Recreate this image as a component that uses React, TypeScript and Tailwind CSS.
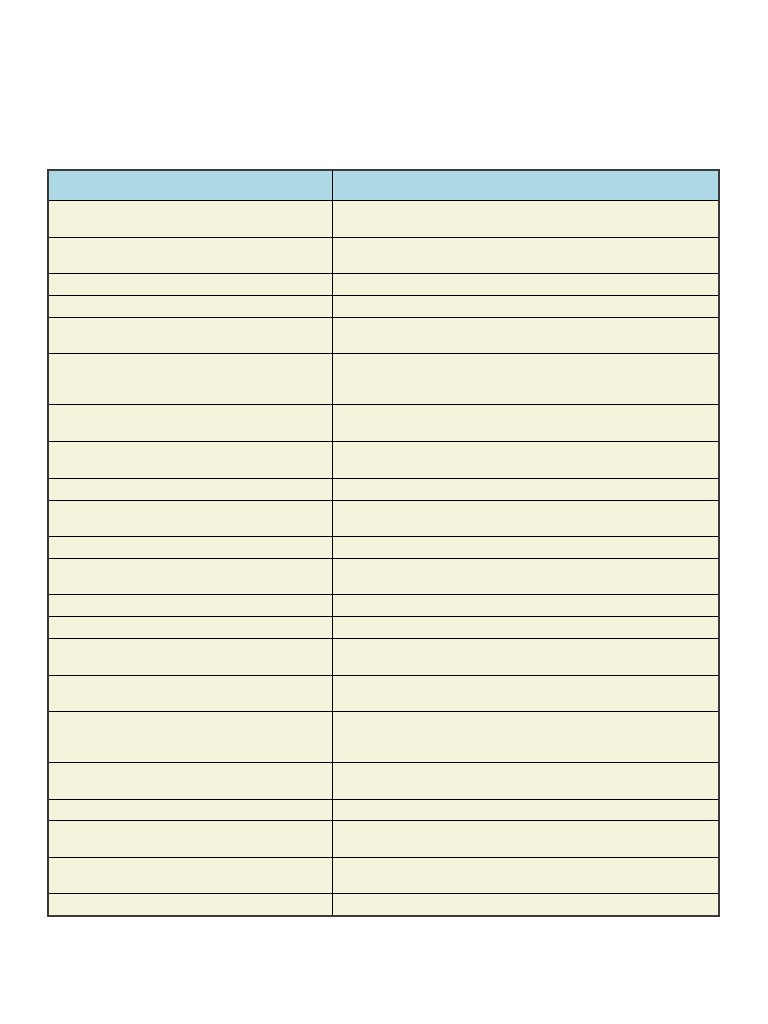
export default function App() {
    // row heights measured off the sheet, border included
    const rowHeights = [37, 36, 22, 22, 36, 51, 37, 37, 22, 36, 22, 36, 22, 22, 37, 36, 51, 37, 21, 37, 36, 22];

    return (
        <div className="min-h-[1024px] w-[768px] bg-white pt-[169px] pl-[47px]">
            <div className="w-[673px] border-2 border-[#3a3a3a]" style={{ fontFamily: '"Liberation Sans", Arial, sans-serif' }}>
                {/* Header */}
                <div className="flex h-[30px] border-b border-black bg-[#add8e6]">
                    <div className="w-[284px] border-r border-black"></div>
                    <div className="flex-1"></div>
                </div>

                {/* Body rows */}
                {rowHeights.map((h, idx) => (
                    <div
                        key={idx}
                        className={`flex bg-[#f4f4dc] ${idx < rowHeights.length - 1 ? "border-b border-black" : ""}`}
                        style={{ height: idx < rowHeights.length - 1 ? h : h - 1 }}
                    >
                        <div className="w-[284px] border-r border-black"></div>
                        <div className="flex-1"></div>
                    </div>
                ))}
            </div>
        </div>
    );
}
